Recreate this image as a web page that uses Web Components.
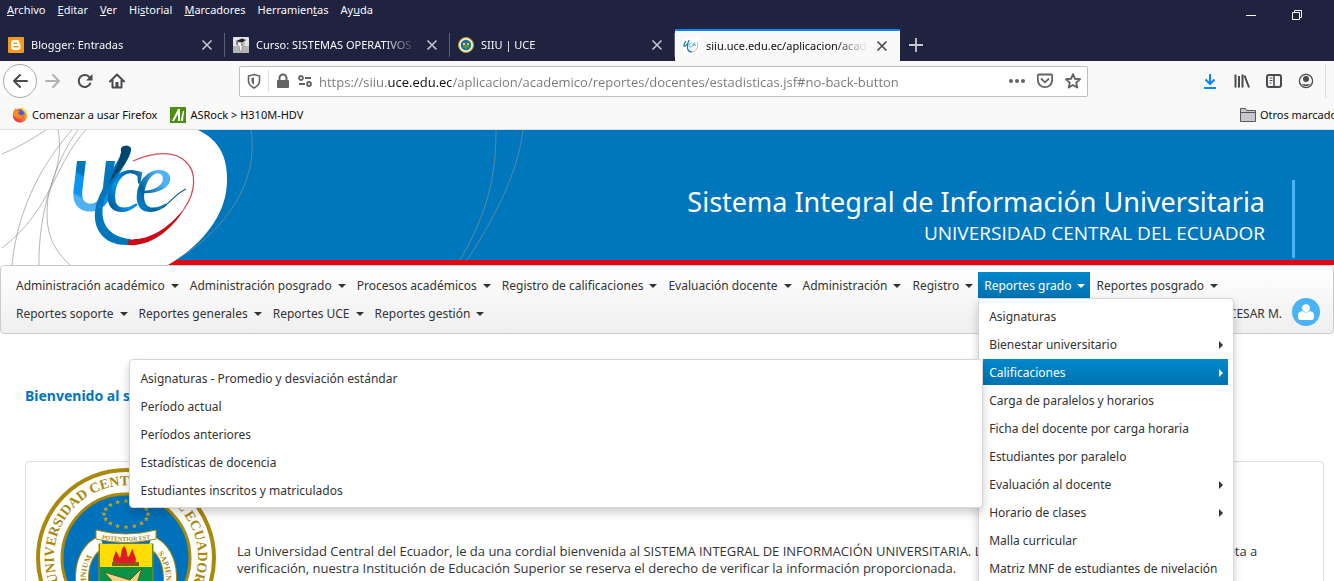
<!DOCTYPE html>
<html lang="es">
<head>
<meta charset="utf-8">
<title>SIIU | UCE</title>
<style>
    html, body {
        height: 100%;
    }
    body {
        margin: 0;
        overflow: hidden;
        background: #fff;
        color: #333;
        font: 12px/18px "Noto Sans", "Open Sans", sans-serif;
    }
</style>
</head>
<body>

<browser-window>
    <browser-tab slot="tab" icon="blogger">Blogger: Entradas</browser-tab>
    <browser-tab slot="tab" icon="moodle">Curso: SISTEMAS OPERATIVOS I</browser-tab>
    <browser-tab slot="tab" icon="seal">SIIU | UCE</browser-tab>
    <browser-tab slot="tab" icon="uce" active>siiu.uce.edu.ec/aplicacion/academico</browser-tab>
</browser-window>

<site-banner>
    <span slot="title">Sistema Integral de Información Universitaria</span>
    <span slot="subtitle">UNIVERSIDAD CENTRAL DEL ECUADOR</span>
</site-banner>

<site-menu user="CESAR M.">
    <menu-item label="Administración académico"></menu-item>
    <menu-item label="Administración posgrado"></menu-item>
    <menu-item label="Procesos académicos"></menu-item>
    <menu-item label="Registro de calificaciones"></menu-item>
    <menu-item label="Evaluación docente"></menu-item>
    <menu-item label="Administración"></menu-item>
    <menu-item label="Registro"></menu-item>
    <menu-item label="Reportes grado" open>
        <menu-row label="Asignaturas"></menu-row>
        <menu-row label="Bienestar universitario" parent></menu-row>
        <menu-row label="Calificaciones" parent open>
            <menu-row label="Asignaturas - Promedio y desviación estándar"></menu-row>
            <menu-row label="Período actual"></menu-row>
            <menu-row label="Períodos anteriores"></menu-row>
            <menu-row label="Estadísticas de docencia"></menu-row>
            <menu-row label="Estudiantes inscritos y matriculados"></menu-row>
        </menu-row>
        <menu-row label="Carga de paralelos y horarios"></menu-row>
        <menu-row label="Ficha del docente por carga horaria"></menu-row>
        <menu-row label="Estudiantes por paralelo"></menu-row>
        <menu-row label="Evaluación al docente" parent></menu-row>
        <menu-row label="Horario de clases" parent></menu-row>
        <menu-row label="Malla curricular"></menu-row>
        <menu-row label="Matriz MNF de estudiantes de nivelación"></menu-row>
    </menu-item>
    <menu-item label="Reportes posgrado"></menu-item>
    <menu-item label="Reportes soporte"></menu-item>
    <menu-item label="Reportes generales"></menu-item>
    <menu-item label="Reportes UCE"></menu-item>
    <menu-item label="Reportes gestión"></menu-item>
</site-menu>

<welcome-panel>
    <span slot="heading">Bienvenido al sistema</span>
    La Universidad Central del Ecuador, le da una cordial bienvenida al SISTEMA INTEGRAL DE INFORMACIÓN UNIVERSITARIA. Le comunicamos que la matrícula está sujeta a verificación, nuestra Institución de Educación Superior se reserva el derecho de verificar la información proporcionada.
</welcome-panel>

<script>
// every icon is a 16x16 drawing
const ICONS = {
    blogger: `<rect width="16" height="16" rx="1" fill="#f8981d"/><path d="M6 3h3a2.500 2.500 0 0 1 2.500 2.500V7l1 .5V10a3 3 0 0 1-3 3H6a3 3 0 0 1-3-3V6a3 3 0 0 1 3-3z" fill="#fff"/><path d="M6 6.200h2.500M6 9.800h4" stroke="#f8981d" stroke-width="1.400" stroke-linecap="round"/>`,
    moodle: `<rect width="16" height="16" rx="1" fill="#e4e4e4"/><path d="M0 9h16v6a1 1 0 0 1-1 1H1a1 1 0 0 1-1-1z" fill="#b5b5b5"/><path d="M5 5h6v4l-2 1v5l-2-1-1-5-2-1z" fill="#f4f4f4" stroke="#777" stroke-width=".6"/><path d="M3 4l6-2.500L13 3l-4 2.500z" fill="#222"/><path d="M4 4v4M9 6v3" stroke="#444"/>`,
    seal: `<circle cx="8" cy="8" r="7.500" fill="#f5ecc4" stroke="#b99c2c"/><circle cx="8" cy="8" r="5.200" fill="#0a72b5"/><path d="M5 7h6v3l-3 2.500L5 10z" fill="#3c9b48"/><path d="M5 6h6v2H5z" fill="#ffd91f"/><path d="M7 6h2v2H7z" fill="#e22"/>`,
    uce: `<rect width="16" height="16" fill="#fff"/><path d="M2.500 3L1 7c-.5 2 1 2 3-1M6 2C3 8 4 14 9 14" fill="none" stroke="#0b7cc1" stroke-width="1.200"/><path d="M8.500 5c-3 0-3.500 4-1 4 1.500 0 2-1 2.500-2 3 0 2.500-3 1-2s-1 4 2 2" fill="none" stroke="#3fa9e8" stroke-width=".9"/><path d="M9 14c5-1 7-6 5-10" fill="none" stroke="#e6a0a5"/>`,
    firefox: `<defs><linearGradient id="f" x1="1" y1="0" x2="0" y2="1"><stop offset="0" stop-color="#ffe226"/><stop offset=".5" stop-color="#ff7139"/><stop offset="1" stop-color="#e60f5c"/></linearGradient></defs><circle cx="8" cy="8.500" r="7.200" fill="url(#f)"/><circle cx="8" cy="7" r="4.600" fill="#5059d8"/><path d="M1 6c1-3 2-4 3-5 0 2 2 2 4 3L6 6c2 3 4 3 6 1 0 4-4 6-7 4C2 10 1 8 1 6z" fill="#ff8a1c"/><path d="M9 0c4 2 7 5 6 9-1-3-2-4-4-5z" fill="#ffd43a"/>`,
    asrock: `<rect width="16" height="16" fill="#4c8f14"/><path d="M2 14L8 2h2v12H8V7l-4 7zM11 14V12l2-8h1l-1 10z" fill="#fff"/>`,
    close: `<path d="M3.500 3.500l9 9M12.500 3.500l-9 9" stroke="currentColor" stroke-width="1.600"/>`,
    plus: `<path d="M8 1v14M1 8h14" stroke="currentColor" stroke-width="1.800"/>`,
    back: `<path d="M15 8H2M8 2L2 8l6 6" fill="none" stroke="currentColor" stroke-width="2" stroke-linecap="round" stroke-linejoin="round"/>`,
    forward: `<path d="M1 8h13M8 2l6 6-6 6" fill="none" stroke="currentColor" stroke-width="2" stroke-linecap="round" stroke-linejoin="round"/>`,
    reload: `<path d="M13.200 10.500A6 6 0 1 1 12 3.700" fill="none" stroke="currentColor" stroke-width="2" stroke-linecap="round"/><path d="M15.500 1v6.500H9z" fill="currentColor"/>`,
    home: `<path d="M1 8.500L8 1.500l7 7M3.500 7v7.500h9V7" fill="none" stroke="currentColor" stroke-width="2" stroke-linecap="round" stroke-linejoin="round"/><path d="M6.500 9h3v5h-3z" fill="currentColor"/>`,
    shield: `<path d="M8 1.500L13.500 3v5c0 3-2.500 5.500-5.500 7C5 13.500 2.500 11 2.500 8V3z" fill="none" stroke="currentColor" stroke-width="1.600"/><path d="M8 4.500v7C6 10.500 5.500 9 5.500 8V5z" fill="currentColor"/>`,
    lock: `<path d="M4.500 8V5a3.500 3.500 0 0 1 7 0v3" fill="none" stroke="currentColor" stroke-width="2"/><rect x="2" y="7" width="12" height="8" rx="1" fill="currentColor"/>`,
    permissions: `<circle cx="4" cy="5" r="2" fill="none" stroke="currentColor" stroke-width="1.800"/><circle cx="12" cy="11" r="2" fill="none" stroke="currentColor" stroke-width="1.800"/><path d="M8 5h6M2 11h6" stroke="currentColor" stroke-width="2"/>`,
    dots: `<circle cx="2" cy="8" r="2" fill="currentColor"/><circle cx="8" cy="8" r="2" fill="currentColor"/><circle cx="14" cy="8" r="2" fill="currentColor"/>`,
    pocket: `<path d="M1.500 1.500h13a1 1 0 0 1 .7 1V7A7 7 0 0 1 .8 7V2.500a1 1 0 0 1 .7-1z" fill="none" stroke="currentColor" stroke-width="1.800"/><path d="M4.500 6L8 9.300 11.500 6" fill="none" stroke="currentColor" stroke-width="1.800" stroke-linecap="round"/>`,
    star: `<path d="M8 1.200l2 4.600 5 .5-3.800 3.300 1.100 4.900L8 12l-4.300 2.500 1.100-4.900L1 6.300l5-.5z" fill="none" stroke="currentColor" stroke-width="1.900" stroke-linejoin="round"/>`,
    download: `<path d="M8 1v10M3.500 6.500L8 11l4.500-4.500M2 15h12" fill="none" stroke="currentColor" stroke-width="2"/>`,
    library: `<path d="M1.500 1.500v13M5 3v11.500M8.500 1.500v13M10.500 2.500l4.500 12" fill="none" stroke="currentColor" stroke-width="2"/>`,
    sidebar: `<rect x="1" y="2" width="14" height="12" rx="2" fill="none" stroke="currentColor" stroke-width="2"/><path d="M8 2v12" stroke="currentColor" stroke-width="1.600"/><path d="M3.500 5h3M3.500 7.500h3M3.500 10h2" stroke="currentColor"/>`,
    account: `<circle cx="8" cy="8" r="6.600" fill="none" stroke="currentColor" stroke-width="1.300"/><circle cx="8" cy="6" r="3" fill="currentColor"/><path d="M3.500 10.500c2 1.200 7 1.200 9 0-1.500 3.500-7.500 3.500-9 0z" fill="currentColor"/>`,
    folder: `<path d="M.5 14.500v-13h5l1 2h9v11z" fill="#c9c8cc" stroke="#57565b"/><path d="M.5 5.500h15" stroke="#57565b"/>`,
    minimize: `<path d="M3 8.500h10" stroke="currentColor"/>`,
    restore: `<path d="M3.500 5.500h7v7h-7zM5.500 5V3.500h7v7H11" fill="none" stroke="currentColor"/>`,
    person: `<circle cx="8" cy="4.500" r="3.500" fill="currentColor"/><path d="M1 13V10.500C1 8 3 7.500 5 7.300c1.800 1.400 4.200 1.400 6 0 2 .2 4 .7 4 3.200V13a2 2 0 0 1-2 2H3a2 2 0 0 1-2-2z" fill="currentColor"/>`
};

class UiIcon extends HTMLElement {
    constructor() {
        super();
        this.attachShadow({ mode: 'open' });
    }

    connectedCallback() {
        this.shadowRoot.innerHTML = `
            <style>
                :host { display: block; flex: none; width: 16px; height: 16px; }
                svg { display: block; width: 100%; height: 100%; }
            </style>
            <svg viewBox="0 0 16 16" aria-hidden="true">${ICONS[this.getAttribute('name')] || ''}</svg>
        `;
    }
}
customElements.define('ui-icon', UiIcon);

class BrowserTab extends HTMLElement {
    constructor() {
        super();
        this.attachShadow({ mode: 'open' });
    }

    connectedCallback() {
        this.shadowRoot.innerHTML = `
            <style>
                :host {
                    display: flex;
                    align-items: center;
                    flex: 0 1 225px;
                    box-sizing: border-box;
                    min-width: 0;
                    padding: 0 10px 0 8px;
                    gap: 7px;
                    color: #f9f9fa;
                    background: linear-gradient(#5d5e78, #5d5e78) right 4px / 1px 24px no-repeat;
                }
                :host([active]) {
                    background: #f9f9fa;
                    border-top: 2px solid #0a84ff;
                    color: #0c0c0d;
                }
                .name {
                    flex: 1;
                    overflow: hidden;
                    white-space: nowrap;
                    -webkit-mask-image: linear-gradient(to left, transparent, #000 32px);
                    mask-image: linear-gradient(to left, transparent, #000 32px);
                }
                button {
                    padding: 0;
                    border: 0;
                    background: none;
                    color: inherit;
                    opacity: .75;
                }
            </style>
            <ui-icon name="${this.getAttribute('icon')}"></ui-icon>
            <span class="name"><slot></slot></span>
            <button aria-label="Cerrar pestaña"><ui-icon name="close"></ui-icon></button>
        `;
    }
}
customElements.define('browser-tab', BrowserTab);

class BrowserWindow extends HTMLElement {
    constructor() {
        super();
        this.attachShadow({ mode: 'open' });
        this.shadowRoot.innerHTML = `
            <style>
                :host {
                    display: block;
                    background: #f9f9fa;
                    border-bottom: 1px solid #dcdcdc;
                    color: #0c0c0d;
                    font-size: 11px;
                    line-height: 16px;
                }
                button, a {
                    padding: 0;
                    border: 0;
                    background: none;
                    color: inherit;
                    font: inherit;
                    text-decoration: none;
                }
                .title {
                    display: flex;
                    justify-content: space-between;
                    height: 29px;
                    padding: 0 29px 0 7px;
                    background: #202340;
                    color: #f9f9fa;
                }
                .menus, .controls, .tabs, .tools, .marks, .marks a {
                    display: flex;
                    align-items: center;
                }
                .menus { gap: 12px; height: 20px; }
                .controls { gap: 30px; }
                .tabs {
                    align-items: stretch;
                    height: 32px;
                    background: #202340;
                    color: #c5c6d0;
                }
                .new { padding: 0 8px; }
                .tools {
                    height: 40px;
                    padding: 0 8px 0 3px;
                    color: #4a4a4f;
                }
                .back {
                    display: grid;
                    place-items: center;
                    box-sizing: border-box;
                    width: 34px;
                    height: 34px;
                    border: 1px solid #a9a9ac;
                    border-radius: 50%;
                    background: #fff;
                }
                .nav { display: flex; gap: 16px; margin-left: 8px; }
                .off { opacity: .4; }
                .address {
                    display: flex;
                    align-items: center;
                    flex: 1;
                    box-sizing: border-box;
                    height: 31px;
                    margin: 0 114px;
                    padding: 0 6px;
                    border: 1px solid #bebebe;
                    border-radius: 2px;
                    background: #fff;
                    color: #636366;
                    gap: 6px;
                }
                .address hr {
                    width: 1px;
                    height: 22px;
                    margin: 0;
                    border: 0;
                    background: #ddd;
                }
                /* the domain is darker than the rest of the address */
                input {
                    flex: 1;
                    min-width: 0;
                    padding: 2px 0 0;
                    border: 0;
                    outline: 0;
                    color: #777;
                    font: 13px/20px "Open Sans", "Noto Sans", sans-serif;
                    background: linear-gradient(90deg, #777 68px, #0c0c0d 68px, #0c0c0d 132px, #777 132px);
                    -webkit-background-clip: text;
                    background-clip: text;
                    -webkit-text-fill-color: transparent;
                }
                .page { display: flex; gap: 12px; }
                .right { display: flex; gap: 16px; }
                .right .down { color: #0a84ff; }
                .rule { width: 1px; height: 34px; margin-left: 11px; background: #ddd; }
                .marks {
                    height: 28px;
                    padding-left: 12px;
                    gap: 13px;
                    overflow: hidden;
                    white-space: nowrap;
                }
                .marks a { gap: 4px; }
                .marks a:last-child { margin-left: auto; margin-right: -19px; }
            </style>
            <div class="title">
                <div class="menus">
                    <button><u>A</u>rchivo</button>
                    <button><u>E</u>ditar</button>
                    <button><u>V</u>er</button>
                    <button>Hi<u>s</u>torial</button>
                    <button><u>M</u>arcadores</button>
                    <button>Herramien<u>t</u>as</button>
                    <button>Ay<u>u</u>da</button>
                </div>
                <div class="controls">
                    <button aria-label="Minimizar"><ui-icon name="minimize"></ui-icon></button>
                    <button aria-label="Restaurar"><ui-icon name="restore"></ui-icon></button>
                </div>
            </div>
            <div class="tabs">
                <slot name="tab"></slot>
                <button class="new" aria-label="Nueva pestaña"><ui-icon name="plus"></ui-icon></button>
            </div>
            <div class="tools">
                <button class="back" aria-label="Atrás"><ui-icon name="back"></ui-icon></button>
                <div class="nav">
                    <button class="off" aria-label="Adelante"><ui-icon name="forward"></ui-icon></button>
                    <button aria-label="Recargar"><ui-icon name="reload"></ui-icon></button>
                    <button aria-label="Inicio"><ui-icon name="home"></ui-icon></button>
                </div>
                <div class="address">
                    <ui-icon name="shield"></ui-icon>
                    <hr>
                    <ui-icon name="lock"></ui-icon>
                    <ui-icon name="permissions"></ui-icon>
                    <input aria-label="Dirección" value="https://siiu.uce.edu.ec/aplicacion/academico/reportes/docentes/estadisticas.jsf#no-back-button">
                    <div class="page">
                        <button aria-label="Acciones de página"><ui-icon name="dots"></ui-icon></button>
                        <button aria-label="Pocket"><ui-icon name="pocket"></ui-icon></button>
                        <button aria-label="Añadir a marcadores"><ui-icon name="star"></ui-icon></button>
                    </div>
                </div>
                <div class="right">
                    <button class="down" aria-label="Descargas"><ui-icon name="download"></ui-icon></button>
                    <button aria-label="Catálogo"><ui-icon name="library"></ui-icon></button>
                    <button aria-label="Barra lateral"><ui-icon name="sidebar"></ui-icon></button>
                    <button aria-label="Cuenta"><ui-icon name="account"></ui-icon></button>
                </div>
                <div class="rule"></div>
            </div>
            <div class="marks">
                <a href="#"><ui-icon name="firefox"></ui-icon>Comenzar a usar Firefox</a>
                <a href="#"><ui-icon name="asrock"></ui-icon>ASRock &gt; H310M-HDV</a>
                <a href="#"><ui-icon name="folder"></ui-icon>Otros marcadores</a>
            </div>
        `;
    }
}
customElements.define('browser-window', BrowserWindow);

class SiteBanner extends HTMLElement {
    constructor() {
        super();
        this.attachShadow({ mode: 'open' });
        this.shadowRoot.innerHTML = `
            <style>
                :host {
                    display: flex;
                    justify-content: space-between;
                    height: 135px;
                    background: linear-gradient(#0076bd 130px, #e30613 130px);
                    color: #fff;
                }
                svg { flex: none; display: block; }
                .titles {
                    align-self: flex-start;
                    margin: 50px 39px 0 0;
                    padding: 3px 27px 13px 0;
                    border-right: 3px solid #4ab3f4;
                    text-align: right;
                    white-space: nowrap;
                }
                h1, h2 { margin: 0; font-weight: 400; }
                h1 { font-size: 27px; line-height: 38px; }
                h2 { font-family: "Open Sans", "Noto Sans", sans-serif; font-size: 19px; line-height: 24px; }
            </style>
            <svg width="530" height="135" viewBox="0 0 530 135" role="img" aria-label="Logo UCE">
                <defs>
                    <linearGradient id="u" gradientUnits="userSpaceOnUse" x1="76" y1="82" x2="100" y2="30">
                        <stop offset=".25" stop-color="#4cb2f2"/>
                        <stop offset=".3" stop-color="#0795f0"/>
                        <stop offset=".6" stop-color="#0795f0"/>
                        <stop offset=".65" stop-color="#0076bd"/>
                    </linearGradient>
                    <linearGradient id="c" gradientUnits="userSpaceOnUse" x1="106" y1="80" x2="166" y2="44">
                        <stop offset="0" stop-color="#00497a"/>
                        <stop offset=".3" stop-color="#0795f0"/>
                        <stop offset=".6" stop-color="#00659f"/>
                        <stop offset=".9" stop-color="#4cb2f2"/>
                    </linearGradient>
                </defs>
                <path d="M0 0H198C219 10 227 26 227 50C227 84 204 111 176 130L168 135H0z" fill="#fff"/>
                <g fill="none" stroke="#8a9296" stroke-opacity=".65">
                    <path d="M2 24Q22 16 46 0M58 0C64 28 52 50 48 68C45 95 48 115 70 135M72 0C45 30 18 75 12 135M78 0C55 30 38 85 39 135M86 0C55 32 52 80 2 118"/>
                    <path d="M251 0C258 44 235 94 176 130M496 0C496 46 488 82 460 130M523 0C518 42 496 86 467 130"/>
                </g>
                <text y="81" font-style="italic" font-size="68" fill="url(#u)"><tspan x="69" font-family="Lato, sans-serif" font-weight="700">U</tspan><tspan x="105" font-family="Liberation Serif, serif" font-size="86" fill="url(#c)">c</tspan><tspan x="134" font-family="Liberation Serif, serif" font-size="86" fill="url(#c)">e</tspan></text>
                <path d="M121 19C122 14 132 15 131 20C128 34 112 52 105 68C99 84 102 107 131 109L128 115C102 116 91 96 96 76C99 62 108 52 112 42C117 30 122 26 121 19z" fill="#0076bd"/>
                <path d="M121 19C122 14 132 15 131 20C129 31 119 40 109 54C114 39 122 29 121 19z" fill="#00466f"/>
                <path d="M128 115C126 111 130 109 138 109C158 106 174 92 186 76C174 98 152 117 128 115z" fill="#c90c19"/>
                <path d="M184 79C196 62 197 42 186 32C175 20 153 22 133 31" fill="none" stroke="#d2505a" stroke-width="1.300"/>
                <path d="M162 78C170 73 174 65 186 59" fill="none" stroke="#0a5c93" stroke-width="1.200"/>
            </svg>
            <div class="titles">
                <h1><slot name="title"></slot></h1>
                <h2><slot name="subtitle"></slot></h2>
            </div>
        `;
    }
}
customElements.define('site-banner', SiteBanner);

class SiteMenu extends HTMLElement {
    constructor() {
        super();
        this.attachShadow({ mode: 'open' });
    }

    connectedCallback() {
        this.shadowRoot.innerHTML = `
            <style>
                :host {
                    display: flex;
                    align-items: flex-end;
                    position: relative;
                    z-index: 2;
                    padding: 6px 13px 7px 9px;
                    border: 1px solid #ccc;
                    border-radius: 4px;
                    background: linear-gradient(#fff, #efefef);
                }
                nav {
                    display: flex;
                    flex: 1;
                    flex-wrap: wrap;
                    row-gap: 2px;
                }
                /* the name may run under an open menu */
                .user {
                    display: flex;
                    align-items: center;
                    gap: 10px;
                    margin-left: -20px;
                    white-space: nowrap;
                }
                .user span:first-child { padding-top: 4px; }
                .face {
                    display: grid;
                    place-items: center;
                    width: 28px;
                    height: 28px;
                    border-radius: 50%;
                    background: #4ab3f4;
                    color: #fff;
                }
                .face ui-icon { width: 18px; height: 18px; }
            </style>
            <nav><slot></slot></nav>
            <div class="user">
                <span>${this.getAttribute('user')}</span>
                <span class="face"><ui-icon name="person"></ui-icon></span>
            </div>
        `;
    }
}
customElements.define('site-menu', SiteMenu);

const PANEL_STYLE = `
    .panel {
        display: none;
        position: absolute;
        z-index: 3;
        box-sizing: border-box;
        border: 1px solid #d5d5d5;
        border-radius: 4px;
        background: #fff;
        color: #333;
        box-shadow: 0 5px 10px rgba(0, 0, 0, .2);
    }
    :host([open]) .panel { display: block; }
    :host([open]) a {
        background: linear-gradient(#0088cc, #0072b0);
        color: #fff;
    }
    a {
        display: flex;
        align-items: center;
        box-sizing: border-box;
        height: 26px;
        color: inherit;
        text-decoration: none;
        white-space: nowrap;
    }
`;

class MenuItem extends HTMLElement {
    constructor() {
        super();
        this.attachShadow({ mode: 'open' });
    }

    connectedCallback() {
        this.shadowRoot.innerHTML = `
            <style>
                ${PANEL_STYLE}
                :host { display: block; position: relative; }
                a { gap: 6px; padding: 1px 5px 0 6px; }
                i {
                    border: 4px solid transparent;
                    border-top-color: currentColor;
                    border-bottom: 0;
                }
                .panel { top: 100%; left: 0; width: 256px; padding: 4px 5px 4px 4px; }
            </style>
            <a href="#">${this.getAttribute('label')}<i></i></a>
            <div class="panel"><slot></slot></div>
        `;
    }
}
customElements.define('menu-item', MenuItem);

class MenuRow extends HTMLElement {
    constructor() {
        super();
        this.attachShadow({ mode: 'open' });
    }

    connectedCallback() {
        const arrow = this.hasAttribute('parent') ? '<i></i>' : '';
        this.shadowRoot.innerHTML = `
            <style>
                ${PANEL_STYLE}
                :host { display: block; position: relative; margin-bottom: 2px; }
                a { justify-content: space-between; padding: 2px 5px 0 6px; }
                i {
                    border: 4px solid transparent;
                    border-left-color: currentColor;
                    border-right: 0;
                }
                .panel { top: 0; right: 100%; width: 64vw; padding: 5px 4px 2px; }
            </style>
            <a href="#">${this.getAttribute('label')}${arrow}</a>
            <div class="panel"><slot></slot></div>
        `;
    }
}
customElements.define('menu-row', MenuRow);

// small stars on a flat ring over the shield
function starRing(cx, cy, rx, ry, count) {
    let out = '';
    for (let i = 0; i < count; i++) {
        const a = i / count * Math.PI * 2;
        const x = cx + rx * Math.cos(a);
        const y = cy + ry * Math.sin(a);
        out += `<path transform="translate(${x.toFixed(1)} ${y.toFixed(1)})" d="M0-2.500L.8-.8 2.500-.7 1.200.5 1.600 2.200 0 1.300-1.600 2.200-1.200.5-2.500-.7-.8-.8z"/>`;
    }
    return out;
}

class WelcomePanel extends HTMLElement {
    constructor() {
        super();
        this.attachShadow({ mode: 'open' });
        this.shadowRoot.innerHTML = `
            <style>
                :host { display: block; padding: 50px 10px 0 25px; }
                h3 {
                    margin: 0 0 53px;
                    color: #0076bd;
                    font-size: 14px;
                    line-height: 24px;
                }
                .card {
                    display: flex;
                    align-items: center;
                    gap: 21px;
                    padding: 6px 40px 6px 10px;
                    border: 1px solid #ddd;
                    border-radius: 4px;
                }
                svg { flex: none; display: block; }
                p {
                    margin: 4px 0 0;
                    font: 13px/17px "Open Sans", "Noto Sans", sans-serif;
                }
            </style>
            <h3><slot name="heading"></slot></h3>
            <div class="card">
                <svg width="180" height="180" viewBox="0 0 180 180" role="img" aria-label="Escudo de la universidad">
                    <defs>
                        <path id="rim" d="M21 110A72 72 0 1 1 159 110"/>
                        <path id="left" d="M57 136C47 120 47 98 61 82"/>
                        <path id="right" d="M119 82C133 98 133 120 123 136"/>
                        <path id="top" d="M60 70Q90 76 120 70"/>
                    </defs>
                    <circle cx="90" cy="90" r="88" fill="#fff" stroke="#a8890b" stroke-width="4"/>
                    <circle cx="90" cy="90" r="64" fill="#0072bc" stroke="#a8890b" stroke-width="3"/>
                    <text font-size="14" font-weight="700" font-family="Liberation Serif, serif" fill="#a8890b" text-anchor="middle">
                        <textPath href="#rim" startOffset="50%">UNIVERSIDAD CENTRAL DEL ECUADOR</textPath>
                    </text>
                    <g fill="#c3a21d">${starRing(90, 46, 22, 13, 16)}</g>
                    <g fill="none">
                        <path d="M66 74C40 84 40 130 62 148M114 74C140 84 140 130 118 148" stroke="#a8890b" stroke-width="14"/>
                        <path d="M66 74C40 84 40 130 62 148M114 74C140 84 140 130 118 148" stroke="#fff" stroke-width="12"/>
                    </g>
                    <path d="M60 62Q90 70 120 62V71Q90 78 60 71z" fill="#fff" stroke="#a8890b"/>
                    <path d="M63 76h54v43c0 20-14 26-27 33c-13-7-27-13-27-33z" fill="#0a9246" stroke="#a8890b"/>
                    <path d="M64 76h52v23H64z" fill="#ffdd00"/>
                    <path d="M78 96c-3-7 2-8 1-13c4 3 3 5 5 7c2-4 0-7 4-12c4 4 2 8 4 11c3-2 2-6 5-8c0 6 5 8 2 15z" fill="#e01b22"/>
                    <path d="M76 95l27 2M103 95l-27 2" stroke="#8b5a12" stroke-width="2"/>
                    <path d="M68 104l26 8 12-12-6 18-14 6-9-10z" fill="#e8d48a" stroke="#5f5a17"/>
                    <g font-family="Liberation Serif, serif" font-weight="700" fill="#a8890b" text-anchor="middle">
                        <text font-size="6"><textPath href="#top" startOffset="50%">POTENTIOR EST</textPath></text>
                        <text font-size="8"><textPath href="#left" startOffset="55%">OMNIUM</textPath></text>
                        <text font-size="8"><textPath href="#right" startOffset="45%">SAPIENTIA</textPath></text>
                    </g>
                </svg>
                <p><slot></slot></p>
            </div>
        `;
    }
}
customElements.define('welcome-panel', WelcomePanel);
</script>
</body>
</html>
